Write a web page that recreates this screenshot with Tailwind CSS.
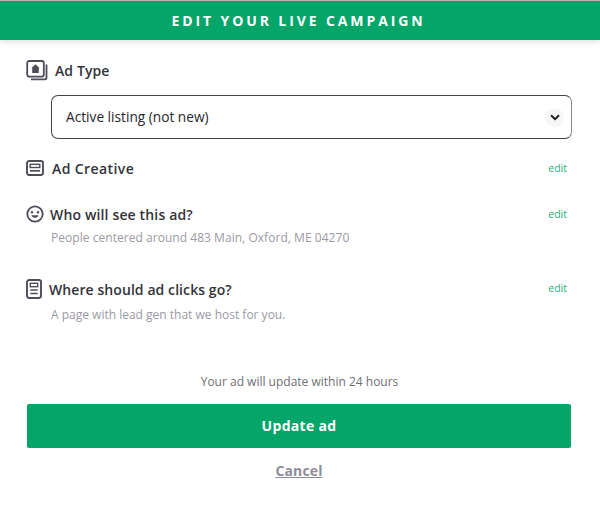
<!DOCTYPE html>
<html lang="en">
<head>
    <meta charset="UTF-8">
    <title>Edit your live campaign</title>
    <script src="https://cdn.jsdelivr.net/npm/@tailwindcss/browser@4"></script>
</head>
<body class="bg-white h-[510px] w-[600px] overflow-hidden font-['Open_Sans',sans-serif] text-[#33333a]">
    <!-- Header -->
    <div class="border-t border-[#b5b5b5] bg-[#03a569] h-[40px] flex items-center justify-center shadow-[0_2px_6px_rgba(0,0,0,0.12)]">
        <h1 class="text-white text-[14px] font-bold tracking-[2.9px] leading-none -ml-[3px]">EDIT YOUR LIVE CAMPAIGN</h1>
    </div>

    <div class="pl-[26px] pr-[28px]">
        <!-- Ad type -->
        <div class="flex items-center gap-[7px] mt-[19px] h-[22px]">
            <svg class="w-[22px] h-[22px] text-[#4d4d58]" viewBox="0 0 22 22" fill="none" stroke="currentColor">
                <rect x="1.2" y="2" width="16.6" height="15.6" rx="2" stroke-width="1.8"/>
                <path d="M20.5 5.5v13.2a1.6 1.6 0 0 1-1.6 1.6H5" stroke-width="1.8"/>
                <path d="M9.5 5.200L5.300 9.300H6.200v4.800h6.600V9.300h.9z" fill="currentColor" stroke="none"/>
            </svg>
            <span class="text-[14px] font-semibold tracking-[0.1px]">Ad Type</span>
        </div>

        <div class="ml-[25px] mt-[14px] h-[44px] w-[521px] border border-[#444] border-r-[#888] rounded-[7px] flex items-center justify-between pl-[14px] pr-[7px]">
            <span class="text-[13.7px] text-[#26262b]">Active listing (not new)</span>
            <span class="w-[19px] h-[19px] rounded-full bg-[#f6f6f6] flex items-center justify-center">
                <svg class="w-[10px] h-[7px]" viewBox="0 0 10 7" fill="none" stroke="#222" stroke-width="2"><path d="M1 1.200l4 4 4-4"/></svg>
            </span>
        </div>

        <!-- Ad creative -->
        <div class="flex items-center justify-between mt-[18px] h-[22px]">
            <div class="flex items-center gap-[8px]">
                <svg class="w-[18px] h-[16px] text-[#4d4d58]" viewBox="0 0 18 16" fill="none" stroke="currentColor">
                    <rect x="1" y="1" width="16" height="14" rx="2.200" stroke-width="1.900"/>
                    <rect x="4.200" y="4.300" width="9.600" height="3.200" stroke-width="1.400"/>
                    <path d="M4 10.800h10" stroke-width="1.700"/>
                </svg>
                <span class="text-[14px] font-semibold tracking-[0.4px]">Ad Creative</span>
            </div>
            <a class="text-[10.500px] text-[#1fae74] mr-[5px] mt-[1px]">edit</a>
        </div>

        <!-- Who will see -->
        <div class="flex items-center justify-between mt-[24px] h-[22px]">
            <div class="flex items-center gap-[6px]">
                <svg class="w-[18px] h-[18px] text-[#4d4d58]" viewBox="0 0 18 18" fill="none" stroke="currentColor">
                    <circle cx="9" cy="9" r="7.700" stroke-width="1.800"/>
                    <circle cx="6" cy="7.200" r="1.200" fill="currentColor" stroke="none"/>
                    <circle cx="12" cy="7.200" r="1.200" fill="currentColor" stroke="none"/>
                    <path d="M5.300 10.300a3.900 3.900 0 0 0 7.400 0z" fill="currentColor" stroke="none"/>
                </svg>
                <span class="text-[14px] font-semibold tracking-[0.15px]">Who will see this ad?</span>
            </div>
            <a class="text-[10.500px] text-[#1fae74] mr-[5px] mt-[1px]">edit</a>
        </div>
        <p class="ml-[25px] mt-[4px] text-[12px] leading-[18px] text-[#9a9aa5] tracking-[0.04px]">People centered around 483 Main, Oxford, ME 04270</p>

        <!-- Where clicks go -->
        <div class="flex items-center justify-between mt-[31px] h-[22px]">
            <div class="flex items-center gap-[7px]">
                <svg class="w-[16px] h-[20px] text-[#4d4d58]" viewBox="0 0 16 20" fill="none" stroke="currentColor">
                    <rect x="1" y="1" width="14" height="18" rx="2.200" stroke-width="1.900"/>
                    <rect x="4.300" y="4.300" width="7.400" height="3.400" stroke-width="1.400"/>
                    <path d="M4.300 11h7.400M4.300 14.500h7.400" stroke-width="1.600"/>
                </svg>
                <span class="text-[14px] font-semibold tracking-[0.08px]">Where should ad clicks go?</span>
            </div>
            <a class="text-[10.500px] text-[#1fae74] mr-[5px]">edit</a>
        </div>
        <p class="ml-[25px] mt-[6px] text-[12px] leading-[18px] text-[#9a9aa5]">A page with lead gen that we host for you.</p>

        <!-- Footer -->
        <p class="text-center mt-[49px] text-[12px] leading-[18px] text-[#6f6f76] pl-[1px]">Your ad will update within 24 hours</p>
        <button class="block ml-[1px] w-[544px] h-[44px] mt-[13px] bg-[#03a569] rounded-[2px] text-white text-[14px] font-bold tracking-[0.3px] pb-[2px]">Update ad</button>
        <div class="text-center mt-[10px]">
            <a class="text-[14px] font-bold text-[#8d8d9c] underline tracking-[0.15px]">Cancel</a>
        </div>
    </div>
</body>
</html>
